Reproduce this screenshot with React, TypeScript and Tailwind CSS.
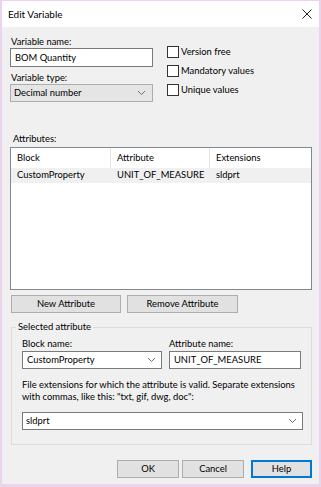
import React from "react";

const Chevron = () => (
  <svg width="9" height="6" viewBox="0 0 9 6" className="shrink-0">
    <path d="M1 1 L4.5 4.5 L8 1" fill="none" stroke="#707070" strokeWidth="1" />
  </svg>
);

const Checkbox = ({ label }: { label: string }) => (
  <div className="flex items-center h-[12px]">
    <div className="w-[12px] h-[12px] border border-[#333333] bg-white shrink-0" />
    <span className="ml-[2px] leading-none">{label}</span>
  </div>
);

const Btn = ({ label, w, focus }: { label: string; w: string; focus?: boolean }) => (
  <div
    className={`${w} h-[18px] flex items-center justify-center bg-[#e1e1e1] border ${
      focus ? "border-[#0078d7] shadow-[inset_0_0_0_1px_#0078d7]" : "border-[#adadad]"
    } leading-none`}
  >
    {label}
  </div>
);

export default function App() {
  return (
    <div
      className="w-[321px] h-[487px] border-l-2 border-r-2 border-t border-b-[3px] border-[#ecd3ee] flex flex-col text-[9.4px] text-[#000000]"
      style={{ fontFamily: 'Lato, "Noto Sans", sans-serif' }}
    >
      <div className="h-[26px] bg-white flex items-center justify-between pl-[6px] pr-[7px] shrink-0">
        <span className="text-[10px] leading-none">Edit Variable</span>
        <svg width="10" height="10" viewBox="0 0 10 10">
          <path d="M0.5 0.5 L9.5 9.5 M9.5 0.5 L0.5 9.5" stroke="#222" strokeWidth="1" />
        </svg>
      </div>
      <div className="flex-1 bg-[#f0f0f0] flex flex-col pl-[8px] pr-[6px]">
        {/* top section */}
        <div className="flex mt-[9px]">
          <div className="w-[143px] flex flex-col">
            <span className="leading-none h-[12px] ml-[1px] flex items-center">Variable name:</span>
            <div className="mt-[0px] h-[19px] bg-white border border-[#7a7a7a] flex items-center px-[4px] leading-none">
              BOM Quantity
            </div>
            <span className="leading-none h-[12px] mt-[5px] ml-[1px] flex items-center">Variable type:</span>
            <div className="mt-[0px] h-[18px] bg-[#e5e5e5] border border-[#adadad] flex items-center justify-between pl-[3px] pr-[6px] leading-none">
              <span>Decimal number</span>
              <Chevron />
            </div>
          </div>
          <div className="ml-[14px] flex flex-col gap-[7px] pt-[10px]">
            <Checkbox label="Version free" />
            <Checkbox label="Mandatory values" />
            <Checkbox label="Unique values" />
          </div>
        </div>

        <span className="leading-none mt-[31px] ml-[3px] h-[12px] flex items-center">Attributes:</span>
        <div className="mt-[2px] h-[143px] bg-white border border-[#828790] flex flex-col mr-[1px]">
          <div className="flex h-[20px]">
            <div className="w-[100px] flex items-center pl-[6px] border-r border-[#e5e5e5]">Block</div>
            <div className="w-[99px] flex items-center pl-[6px] border-r border-[#e5e5e5]">Attribute</div>
            <div className="flex-1 flex items-center pl-[6px]">Extensions</div>
          </div>
          <div className="flex h-[15px] bg-[#f0f0f0] items-center">
            <div className="w-[100px] pl-[6px]">CustomProperty</div>
            <div className="w-[99px] pl-[6px]">UNIT_OF_MEASURE</div>
            <div className="flex-1 pl-[6px]">sldprt</div>
          </div>
        </div>

        <div className="flex mt-[5px] ml-[1px] gap-[6px]">
          <Btn label="New Attribute" w="w-[110px]" />
          <Btn label="Remove Attribute" w="w-[111px]" />
        </div>

        <div className="relative mt-[14px] ml-[1px] mr-[1px] h-[118px] border border-[#dcdcdc] flex flex-col px-[10px]">
          <span className="absolute -top-[7px] left-[4px] px-[2px] bg-[#f0f0f0] leading-none h-[12px] flex items-center">Selected attribute</span>
          <div className="flex mt-[10px] gap-[7px]">
            <div className="w-[141px] flex flex-col">
              <span className="leading-none h-[12px] flex items-center">Block name:</span>
              <div className="mt-[1px] h-[18px] bg-white border border-[#7a7a7a] flex items-center justify-between pl-[4px] pr-[5px] leading-none">
                <span>CustomProperty</span>
                <Chevron />
              </div>
            </div>
            <div className="w-[133px] flex flex-col">
              <span className="leading-none h-[12px] flex items-center">Attribute name:</span>
              <div className="mt-[1px] h-[18px] bg-white border border-[#7a7a7a] flex items-center pl-[4px] leading-none">
                UNIT_OF_MEASURE
              </div>
            </div>
          </div>
          <div className="mt-[10px] leading-[12px] w-[285px]">
            File extensions for which the attribute is valid. Separate extensions with commas, like this: "txt, gif, dwg, doc":
          </div>
          <div className="mt-[9px] h-[18px] w-[281px] bg-white border border-[#7a7a7a] flex items-center justify-between pl-[3px] pr-[5px] leading-none">
            <span>sldprt</span>
            <Chevron />
          </div>
        </div>

        <div className="flex justify-end mt-[15px] mr-[1px] gap-[3px]">
          <Btn label="OK" w="w-[62px]" />
          <Btn label="Cancel" w="w-[62px]" />
          <div className="w-[1px]" />
          <Btn label="Help" w="w-[61px]" focus />
        </div>
      </div>
    </div>
  );
}
